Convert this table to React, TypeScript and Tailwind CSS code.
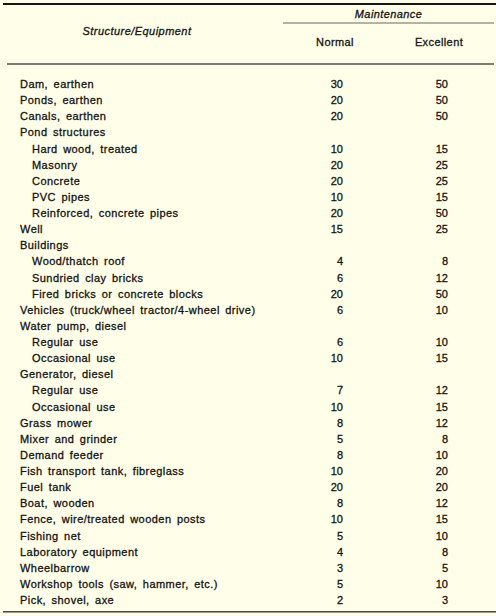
import React from "react";

type Row = [string, string, string, number];

const rows: Row[] = [
  ["Dam, earthen", "30", "50", 0],
  ["Ponds, earthen", "20", "50", 0],
  ["Canals, earthen", "20", "50", 0],
  ["Pond structures", "", "", 0],
  ["Hard wood, treated", "10", "15", 1],
  ["Masonry", "20", "25", 1],
  ["Concrete", "20", "25", 1],
  ["PVC pipes", "10", "15", 1],
  ["Reinforced, concrete pipes", "20", "50", 1],
  ["Well", "15", "25", 0],
  ["Buildings", "", "", 0],
  ["Wood/thatch roof", "4", "8", 1],
  ["Sundried clay bricks", "6", "12", 1],
  ["Fired bricks or concrete blocks", "20", "50", 1],
  ["Vehicles (truck/wheel tractor/4-wheel drive)", "6", "10", 0],
  ["Water pump, diesel", "", "", 0],
  ["Regular use", "6", "10", 1],
  ["Occasional use", "10", "15", 1],
  ["Generator, diesel", "", "", 0],
  ["Regular use", "7", "12", 1],
  ["Occasional use", "10", "15", 1],
  ["Grass mower", "8", "12", 0],
  ["Mixer and grinder", "5", "8", 0],
  ["Demand feeder", "8", "10", 0],
  ["Fish transport tank, fibreglass", "10", "20", 0],
  ["Fuel tank", "20", "20", 0],
  ["Boat, wooden", "8", "12", 0],
  ["Fence, wire/treated wooden posts", "10", "15", 0],
  ["Fishing net", "5", "10", 0],
  ["Laboratory equipment", "4", "8", 0],
  ["Wheelbarrow", "3", "5", 0],
  ["Workshop tools (saw, hammer, etc.)", "5", "10", 0],
  ["Pick, shovel, axe", "2", "3", 0],
];

export default function App() {
  return (
    <div
      className="w-[496px] h-[616px] bg-[#fffee9] text-[#141414] text-[11px] overflow-hidden pt-[3px] [-webkit-text-stroke:0.3px_#141414]"
      style={{ fontFamily: '"Liberation Sans", Arial, sans-serif' }}
    >
      <div className="ml-[3px] h-[2px] bg-[#161616]" />
      <div className="grid grid-cols-[283px_211px] h-[58px]">
        <div className="flex justify-center pt-[18px] pr-[9px]">
          <span className="italic leading-[16px] tracking-[0.45px] [word-spacing:2px]">
            Structure/Equipment
          </span>
        </div>
        <div className="flex flex-col">
          <div className="h-[17px] pt-[1px] flex justify-center italic leading-[16px] tracking-[0.4px]">
            Maintenance
          </div>
          <div className="h-[2px] bg-[#b3b2a4]" />
          <div className="grid grid-cols-[104px_104px] pt-[10px]">
            <div className="text-center leading-[16px] tracking-[0.4px]">Normal</div>
            <div className="text-center leading-[16px] tracking-[0.4px]">Excellent</div>
          </div>
        </div>
      </div>
      <div className="ml-[7px] mr-[2px] h-[2px] bg-[#7d7c72]" />
      <div className="flex flex-col pt-[11px]">
        {rows.map((r, i) => (
          <div key={i} className="grid grid-cols-[300px_43px_105px] h-[16.125px] leading-[16px]">
            <div
              className={
                (r[3] ? "pl-[32px]" : "pl-[20px]") +
                " whitespace-nowrap tracking-[0.45px] [word-spacing:2px]"
              }
            >
              {r[0]}
            </div>
            <div className="text-right">{r[1]}</div>
            <div className="text-right">{r[2]}</div>
          </div>
        ))}
      </div>
      <div className="mt-[3px] ml-[3px]">
        <div className="h-[1px] bg-[#4a4a4a]" />
        <div className="h-[1px] bg-[#9a9a90]" />
      </div>
    </div>
  );
}
